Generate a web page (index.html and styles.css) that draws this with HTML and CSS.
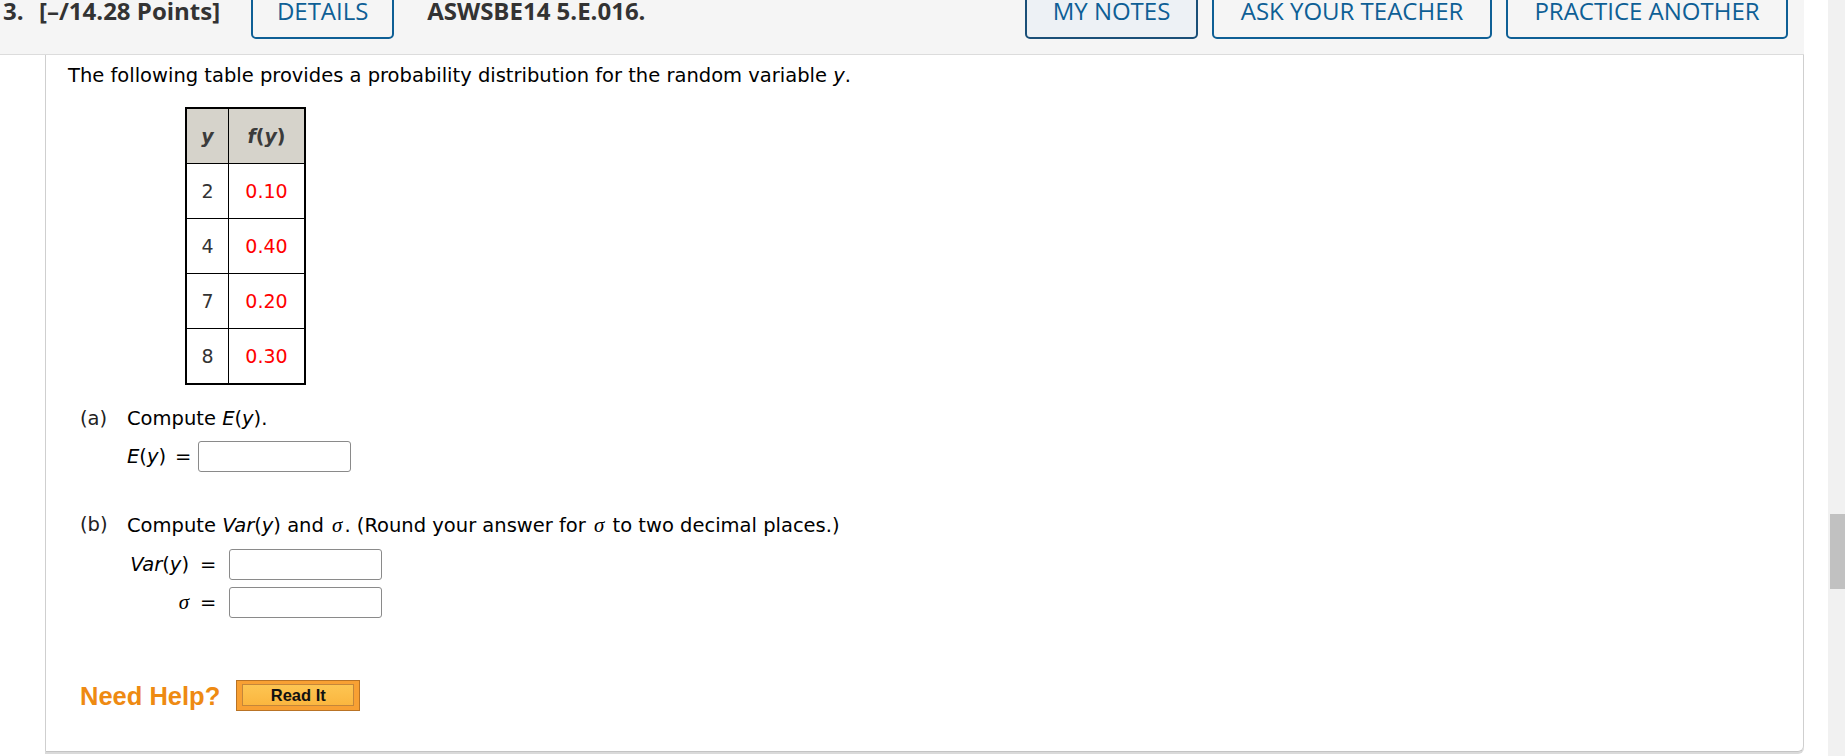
FILE: index.html
```html
<!DOCTYPE html>
<html lang="en">
<head>
<meta charset="utf-8">
<title>Question 3</title>
<link rel="stylesheet" href="styles.css">
</head>
<body>
<div class="page">
  <div class="main">
    <div class="question">
      <div class="qhead">
        <div class="qhead-row">
          <span class="qnum">3.</span>
          <span class="qpts">[–/14.28 Points]</span>
          <span class="hbtn details">DETAILS</span>
          <span class="qid">ASWSBE14 5.E.016.</span>
          <div class="hright">
            <span class="hbtn notes">MY NOTES</span>
            <span class="hbtn">ASK YOUR TEACHER</span>
            <span class="hbtn">PRACTICE ANOTHER</span>
          </div>
        </div>
      </div>
      <div class="qbody">
        <p class="intro">The following table provides a probability distribution for the random variable <i>y</i>.</p>
        <table class="dist">
          <tr class="th"><td><b><i>y</i></b></td><td><b><i>f</i>(<i>y</i>)</b></td></tr>
          <tr><td>2</td><td class="red">0.10</td></tr>
          <tr><td>4</td><td class="red">0.40</td></tr>
          <tr><td>7</td><td class="red">0.20</td></tr>
          <tr><td>8</td><td class="red">0.30</td></tr>
        </table>

        <div class="part part-a">
          <div class="pline"><span class="plabel">(a)</span><span>Compute <i>E</i>(<i>y</i>).</span></div>
          <div class="arow arow-a"><span class="lbl"><i>E</i>(<i>y</i>)</span><span class="eq">=</span><span class="inp"></span></div>
        </div>

        <div class="part part-b">
          <div class="pline"><span class="plabel">(b)</span><span>Compute <i>Var</i>(<i>y</i>) and <i class="sig">σ</i>. (Round your answer for <i class="sig">σ</i> to two decimal places.)</span></div>
          <div class="arow arow-b"><span class="lbl wide"><i>Var</i>(<i>y</i>)</span><span class="eq">=</span><span class="inp"></span></div>
          <div class="arow arow-c"><span class="lbl wide"><i class="sig">σ</i></span><span class="eq">=</span><span class="inp"></span></div>
        </div>

        <div class="help">
          <span class="need">Need Help?</span>
          <span class="readit"><span class="readit-in">Read It</span></span>
        </div>
      </div>
    </div>
  </div>
  <div class="scrollbar"><div class="thumb"></div></div>
</div>
</body>
</html>
```

FILE: styles.css
```css
html, body {
  margin: 0;
  padding: 0;
  background: #ffffff;
  overflow: hidden;
}
.page {
  display: flex;
  width: 1845px;
  height: 756px;
  overflow: hidden;
}
.main {
  width: 1828px;
  flex: none;
}
.question {
  width: 1804px;
}
.qhead {
  height: 54px;
  background: #f5f5f5;
  border-bottom: 1px solid #dcdcdc;
  overflow: hidden;
}
.qhead-row {
  display: flex;
  align-items: center;
  height: 56px;
  margin-top: -17px;
  padding: 0 16px 0 3px;
  font-family: "Open Sans", "Liberation Sans", sans-serif;
  font-size: 24px;
  line-height: 24px;
  color: #333333;
}
.qnum {
  font-weight: 700;
  width: 36px;
}
.qpts {
  font-weight: 700;
}
.qid {
  font-weight: 700;
  margin-left: 33px;
}
.hbtn {
  box-sizing: border-box;
  height: 56px;
  display: flex;
  align-items: center;
  justify-content: center;
  border: 2px solid #0e5f95;
  border-radius: 5px;
  color: #0e5f95;
  padding: 0 20px;
  font-weight: 400;
}
.details {
  margin-left: 31px;
  width: 143px;
}
.hright {
  margin-left: auto;
  display: flex;
  gap: 14px;
}
.notes {
  width: 173px;
  background: #edf1f5;
  border-color: #1a4f78;
}
.hright .hbtn:nth-child(2) { width: 280px; }
.hright .hbtn:nth-child(3) { width: 282px; }

.qbody {
  margin-left: 45px;
  height: 697px;
  box-sizing: border-box;
  border-left: 1px solid #cfcfcf;
  border-right: 1px solid #cfcfcf;
  border-bottom: 1px solid #c4c4c4;
  border-bottom-right-radius: 6px;
  box-shadow: 0 2px 0 #dadada;
  padding: 9px 0 0 22px;
  font-family: "DejaVu Sans", Verdana, sans-serif;
  font-size: 19.5px;
  line-height: 24px;
  color: #000000;
}
.intro {
  margin: 0;
}
.dist {
  margin: 19px 0 0 117px;
  border-collapse: collapse;
  border: 2px solid #000;
  color: #333;
  font-size: 19px;
}
.dist td {
  border: 1px solid #000;
  text-align: center;
  height: 54px;
  padding: 0;
}
.dist td:first-child { width: 41px; }
.dist td:last-child { width: 75px; }
.dist .th td {
  background: #d6d3cb;
  height: 54px;
  color: #3b3b3b;
}
.dist .red { color: #ff0000; }

.part {
  margin: 22px 0 0 12px;
}
.part-b { margin-top: 41px; }
.pline {
  display: flex;
}
.plabel {
  width: 47px;
  flex: none;
  color: #222;
}
.pline .sig {
  margin: 0 2px;
}
.sig {
  font-family: "Liberation Serif", "DejaVu Serif", serif;
  font-size: 21px;
}
.arow {
  display: flex;
  align-items: center;
  padding-left: 47px;
}
.arow-a { margin-top: 10px; }
.arow-b { margin-top: 11px; }
.arow-c { margin-top: 7px; }
.lbl.wide {
  width: 62px;
  text-align: right;
}
.eq {
  margin: 0 7px 0 9px;
}
.arow-b .eq, .arow-c .eq { margin: 0 13px 0 11px; }
.inp {
  width: 153px;
  height: 31px;
  box-sizing: border-box;
  border: 1px solid #8a8a8a;
  border-radius: 3px;
  background: #fff;
}

.help {
  display: flex;
  align-items: center;
  margin: 62px 0 0 12px;
  height: 31px;
}
.need {
  font-family: "Liberation Sans", Arial, sans-serif;
  font-weight: 700;
  font-size: 25.5px;
  line-height: 26px;
  color: #ee8a12;
  margin-right: 16px;
}
.readit {
  box-sizing: border-box;
  width: 124px;
  height: 31px;
  border: 1px solid #b97325;
  background: #f8a033;
  padding: 3px 5px 4px;
  display: flex;
}
.readit-in {
  flex: 1;
  border: 1px solid #c4863a;
  background: linear-gradient(#fdc552, #fbb63f);
  font-family: "Liberation Sans", Arial, sans-serif;
  font-weight: 700;
  font-size: 16.5px;
  color: #111;
  display: flex;
  align-items: center;
  justify-content: center;
}

.scrollbar {
  width: 17px;
  flex: none;
  background: #f1f1f1;
  display: flex;
  justify-content: flex-end;
}
.thumb {
  width: 15px;
  height: 75px;
  margin-top: 514px;
  background: #c1c1c1;
}
```
